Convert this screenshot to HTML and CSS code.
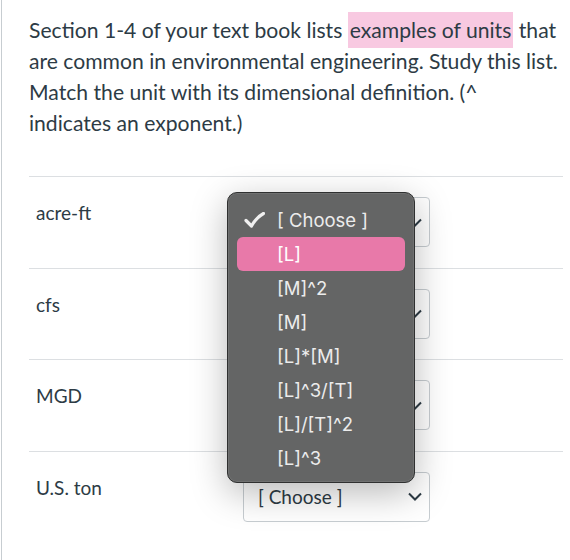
FILE: index.html
```html
<!DOCTYPE html>
<html lang="en">

<head>
  <meta charset="UTF-8">
  <meta name="viewport" content="width=device-width, initial-scale=1.0">
  <title>matching question</title>
  <link rel="stylesheet" href="styles.css">
</head>

<body>
  <div class="question">
    <p class="question-text">Section 1-4 of your text book lists <span class="mark">examples of units</span> that
      are common in environmental engineering. Study this list. Match the unit with its dimensional
      definition. (^ indicates an exponent.)</p>

    <div class="answers">
      <div class="answer-row">
        <div class="answer-label">acre-ft</div>
        <div class="select-wrap">
          <div class="select">
            <span>[ Choose ]</span>
            <svg class="chevron" width="14" height="9" viewBox="0 0 14 9"><polyline points="1,1.5 7,7.5 13,1.5" /></svg>
          </div>
          <ul class="menu">
            <li class="menu-item">
              <span class="tick"><svg width="21" height="16" viewBox="0 0 21 16"><path d="M2 8.5 L7.5 14 C10.5 8.5 14 4.5 19.5 1.5" /></svg></span>
              <span>[ Choose ]</span>
            </li>
            <li class="menu-item hover"><span class="tick"></span><span>[L]</span></li>
            <li class="menu-item"><span class="tick"></span><span>[M]^2</span></li>
            <li class="menu-item"><span class="tick"></span><span>[M]</span></li>
            <li class="menu-item"><span class="tick"></span><span>[L]*[M]</span></li>
            <li class="menu-item"><span class="tick"></span><span>[L]^3/[T]</span></li>
            <li class="menu-item"><span class="tick"></span><span>[L]/[T]^2</span></li>
            <li class="menu-item"><span class="tick"></span><span>[L]^3</span></li>
          </ul>
        </div>
      </div>

      <div class="answer-row">
        <div class="answer-label">cfs</div>
        <div class="select-wrap">
          <div class="select">
            <span>[ Choose ]</span>
            <svg class="chevron" width="14" height="9" viewBox="0 0 14 9"><polyline points="1,1.5 7,7.5 13,1.5" /></svg>
          </div>
        </div>
      </div>

      <div class="answer-row">
        <div class="answer-label">MGD</div>
        <div class="select-wrap">
          <div class="select">
            <span>[ Choose ]</span>
            <svg class="chevron" width="14" height="9" viewBox="0 0 14 9"><polyline points="1,1.5 7,7.5 13,1.5" /></svg>
          </div>
        </div>
      </div>

      <div class="answer-row">
        <div class="answer-label">U.S. ton</div>
        <div class="select-wrap">
          <div class="select">
            <span>[ Choose ]</span>
            <svg class="chevron" width="14" height="9" viewBox="0 0 14 9"><polyline points="1,1.5 7,7.5 13,1.5" /></svg>
          </div>
        </div>
      </div>
    </div>
  </div>
</body>

</html>
```

FILE: styles.css
```css
body {
  margin: 0;
  background: #fff;
  color: #2d3b45;
  font-family: Lato, "Liberation Sans", sans-serif;
}

.question {
  margin-left: 1px;
  border-left: 1px solid #c7cdd1;
  padding: 15px 7px 0 27px;
  min-height: 560px;
  box-sizing: border-box;
}

.question-text {
  margin: 0 0 37px;
  font-size: 21.15px;
  line-height: 31px;
}

.question-text .mark {
  background: #f8c9e1;
  padding: 5px 2px;
}

.answer-row {
  display: flex;
  border-top: 1px solid #dcdfe2;
  padding: 20px 0 20.5px;
}

.answer-label {
  width: 207px;
  padding: 4px 0 0 7px;
  font-size: 19px;
  line-height: 24px;
}

.select-wrap {
  position: relative;
}

.select {
  display: flex;
  align-items: center;
  justify-content: space-between;
  box-sizing: border-box;
  width: 187px;
  height: 50px;
  padding: 0 7px 0 14px;
  border: 1px solid #c7cdd1;
  border-radius: 4px;
  background: #fff;
  font-size: 19px;
}

.chevron {
  fill: none;
  stroke: #2d3b45;
  stroke-width: 2;
}

.menu {
  position: absolute;
  top: -5px;
  left: -16px;
  z-index: 2;
  width: 188px;
  height: 291px;
  box-sizing: border-box;
  margin: 0;
  padding: 10px 9px 8px;
  list-style: none;
  background: #646565;
  border: 1px solid #2f3030;
  border-radius: 10px;
  box-shadow: 0 10px 36px rgba(0, 0, 0, 0.28), inset 0 0 0 1px rgba(255, 255, 255, 0.08);
  font-family: Inter, "Open Sans", sans-serif;
  font-size: 18.5px;
  color: #ececec;
}

.menu-item {
  display: flex;
  align-items: center;
  height: 34px;
  border-radius: 6px;
}

.menu-item .tick {
  display: flex;
  width: 40px;
  padding-left: 7px;
  box-sizing: border-box;
}

.menu-item .tick path {
  fill: none;
  stroke: #f0f0f0;
  stroke-width: 3.2;
  stroke-linecap: round;
  stroke-linejoin: round;
}

.menu-item.hover {
  background: #e879a9;
  color: #fff;
}
```
